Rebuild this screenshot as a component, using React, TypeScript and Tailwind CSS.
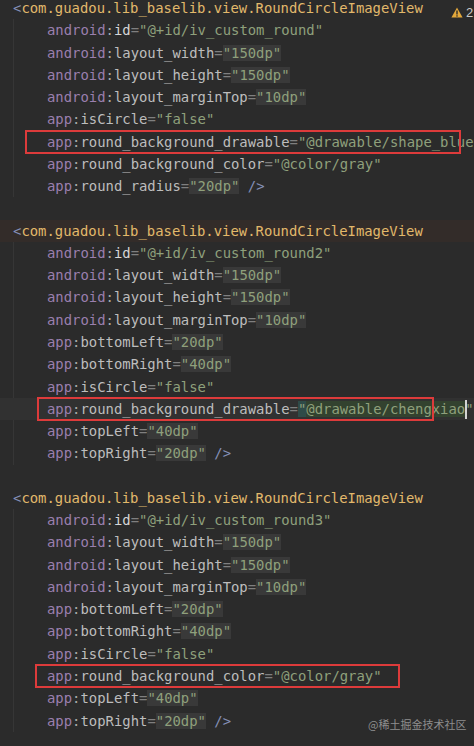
import React from "react";

type AttrDef = {
  ns: string;
  name: string;
  value: string;
  dim?: boolean;
  close?: boolean;
  box?: { left: string; width: string };
  current?: boolean;
};

const TAG = "com.guadou.lib_baselib.view.RoundCircleImageView";

function Attr({ a }: { a: AttrDef }) {
  return (
    <div
      className={`relative h-[22.28px] pl-[47px] whitespace-pre ${
        a.current ? "bg-[#313131]" : ""
      }`}
    >
      <span className="text-[#9a7fae]">{a.ns}</span>
      <span className="text-[#a8a8a8]">:</span>
      <span className={a.name === "id" ? "text-[#d6d6d6]" : "text-[#bdbdbd]"}>{a.name}</span>
      <span className="text-[#7f7f7f]">=</span>
      {a.current ? (
        <>
          <span className="bg-[#2f4b48] text-[#8fa07c]">"</span>
          <span className="bg-[#33422f] text-[#8fa07c]">@drawable/chengxiao</span>
          <span className="relative inline-block w-0 align-middle">
            <span className="absolute left-[0px] top-[-10px] h-[19px] w-[2px] bg-[#d4d4d4]" />
          </span>
          <span className="text-[#8fa07c]">"</span>
        </>
      ) : (
        <span className={`text-[#8fa07c] ${a.dim ? "bg-[#393939]" : ""}`}>"{a.value}"</span>
      )}
      {a.close && <span className="text-[#8590b8]"> /&gt;</span>}
      {a.box && (
        <span
          className={`pointer-events-none absolute top-[-1px] h-[24px] border-[2.5px] border-[#dd3b3b] ${a.box.left} ${a.box.width}`}
        />
      )}
    </div>
  );
}

function Block({ attrs, tagBg }: { attrs: AttrDef[]; tagBg?: boolean }) {
  return (
    <div>
      <div className={`h-[22.28px] pl-[13px] whitespace-pre ${tagBg ? "bg-[#332c29]" : ""}`}>
        <span className="text-[#8590b8]">&lt;</span>
        <span className="text-[#e2b96b]">{TAG}</span>
      </div>
      <div className="relative">
        <span className="absolute left-[13px] top-0 bottom-0 w-px bg-[#363636]" />
        {attrs.map((a, i) => (
          <Attr key={i} a={a} />
        ))}
      </div>
    </div>
  );
}

const block1: AttrDef[] = [
  { ns: "android", name: "id", value: "@+id/iv_custom_round" },
  { ns: "android", name: "layout_width", value: "150dp", dim: true },
  { ns: "android", name: "layout_height", value: "150dp", dim: true },
  { ns: "android", name: "layout_marginTop", value: "10dp", dim: true },
  { ns: "app", name: "isCircle", value: "false" },
  {
    ns: "app",
    name: "round_background_drawable",
    value: "@drawable/shape_blue",
    box: { left: "left-[25px]", width: "w-[436px]" },
  },
  { ns: "app", name: "round_background_color", value: "@color/gray" },
  { ns: "app", name: "round_radius", value: "20dp", dim: true, close: true },
];

const block2: AttrDef[] = [
  { ns: "android", name: "id", value: "@+id/iv_custom_round2" },
  { ns: "android", name: "layout_width", value: "150dp", dim: true },
  { ns: "android", name: "layout_height", value: "150dp", dim: true },
  { ns: "android", name: "layout_marginTop", value: "10dp", dim: true },
  { ns: "app", name: "bottomLeft", value: "20dp", dim: true },
  { ns: "app", name: "bottomRight", value: "40dp", dim: true },
  { ns: "app", name: "isCircle", value: "false" },
  {
    ns: "app",
    name: "round_background_drawable",
    value: "@drawable/chengxiao",
    current: true,
    box: { left: "left-[37px]", width: "w-[397px]" },
  },
  { ns: "app", name: "topLeft", value: "40dp", dim: true },
  { ns: "app", name: "topRight", value: "20dp", dim: true, close: true },
];

const block3: AttrDef[] = [
  { ns: "android", name: "id", value: "@+id/iv_custom_round3" },
  { ns: "android", name: "layout_width", value: "150dp", dim: true },
  { ns: "android", name: "layout_height", value: "150dp", dim: true },
  { ns: "android", name: "layout_marginTop", value: "10dp", dim: true },
  { ns: "app", name: "bottomLeft", value: "20dp", dim: true },
  { ns: "app", name: "bottomRight", value: "40dp", dim: true },
  { ns: "app", name: "isCircle", value: "false" },
  {
    ns: "app",
    name: "round_background_color",
    value: "@color/gray",
    box: { left: "left-[35px]", width: "w-[365px]" },
  },
  { ns: "app", name: "topLeft", value: "40dp", dim: true },
  { ns: "app", name: "topRight", value: "20dp", dim: true, close: true },
];

export default function App() {
  return (
    <div className="relative h-[746px] w-[474px] overflow-hidden bg-[#2b2b2b]">
      <div
        className="mt-[-3px] text-[13.9px] leading-[22.28px]"
        style={{ fontFamily: '"DejaVu Sans Mono", "Liberation Mono", monospace' }}
      >
        <Block attrs={block1} />
        <div className="h-[22.28px]" />
        <Block attrs={block2} tagBg />
        <div className="h-[22.28px]" />
        <Block attrs={block3} />
      </div>

      {/* inspection widget */}
      <div className="absolute left-[451px] top-[6px] flex items-center gap-[3px]">
        <svg width="12" height="11" viewBox="0 0 12 11">
          <path d="M6 0.5 L11.6 10.5 L0.4 10.5 Z" fill="#e3a83b" />
          <rect x="5.3" y="3.5" width="1.4" height="4" fill="#2b2b2b" />
          <rect x="5.3" y="8.3" width="1.4" height="1.3" fill="#2b2b2b" />
        </svg>
        <span
          className="text-[13px] leading-none text-[#c8c8c8]"
          style={{ fontFamily: '"Liberation Sans", sans-serif' }}
        >
          2
        </span>
      </div>

      {/* watermark */}
      <div
        className="absolute left-[368px] top-[716px] text-[11px] leading-[16px] text-[#8e8e8e]"
        style={{ fontFamily: '"Noto Sans CJK SC", "Noto Sans", sans-serif' }}
      >
        @稀土掘金技术社区
      </div>
    </div>
  );
}
